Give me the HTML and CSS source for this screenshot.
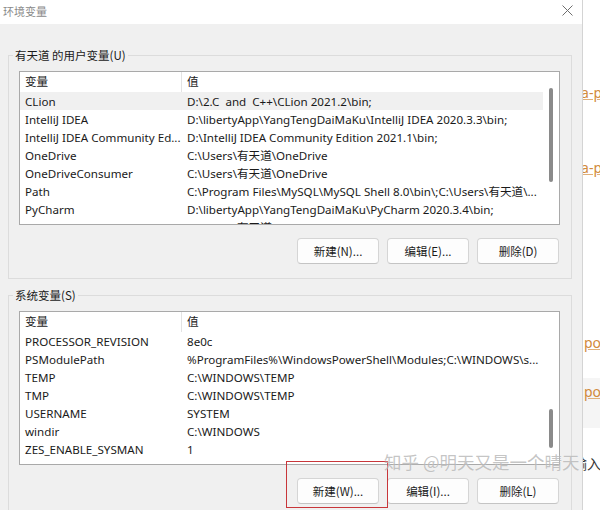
FILE: index.html
```html
<!DOCTYPE html>
<html lang="zh-CN">
<head>
<meta charset="utf-8">
<title>环境变量</title>
<link rel="stylesheet" href="styles.css">
</head>
<body>
<div class="screen">
  <div class="dialog">
    <div class="titlebar">
      <span class="title">环境变量</span>
      <svg class="close" width="11" height="11" viewBox="0 0 11 11"><path d="M0.5 0.5L10.5 10.5M10.5 0.5L0.5 10.5" stroke="#6e6e6e" stroke-width="1" fill="none"/></svg>
    </div>
    <div class="body">
      <fieldset class="group">
        <legend>有天道 的用户变量(U)</legend>
        <div class="list">
          <div class="cols">
            <div class="row head"><div class="c1">变量</div><div class="c2">值</div></div>
            <div class="row sel"><div class="c1">CLion</div><div class="c2">D:\2.C&nbsp; and&nbsp; C++\CLion 2021.2\bin;</div></div>
            <div class="row"><div class="c1">IntelliJ IDEA</div><div class="c2">D:\libertyApp\YangTengDaiMaKu\IntelliJ IDEA 2020.3.3\bin;</div></div>
            <div class="row"><div class="c1">IntelliJ IDEA Community Ed...</div><div class="c2">D:\IntelliJ IDEA Community Edition 2021.1\bin;</div></div>
            <div class="row"><div class="c1">OneDrive</div><div class="c2">C:\Users\有天道\OneDrive</div></div>
            <div class="row"><div class="c1">OneDriveConsumer</div><div class="c2">C:\Users\有天道\OneDrive</div></div>
            <div class="row"><div class="c1">Path</div><div class="c2">C:\Program Files\MySQL\MySQL Shell 8.0\bin\;C:\Users\有天道\...</div></div>
            <div class="row"><div class="c1">PyCharm</div><div class="c2">D:\libertyApp\YangTengDaiMaKu\PyCharm 2020.3.4\bin;</div></div>
            <div class="row"><div class="c1">TEMP</div><div class="c2">C:\Users\有天道\AppData\Local\Temp</div></div>
          </div>
          <div class="scroll"><div class="thumb thumb-user"></div></div>
        </div>
        <div class="buttons">
          <button class="btn">新建(N)...</button>
          <button class="btn">编辑(E)...</button>
          <button class="btn">删除(D)</button>
        </div>
      </fieldset>

      <fieldset class="group group-sys">
        <legend>系统变量(S)</legend>
        <div class="list">
          <div class="cols">
            <div class="row head"><div class="c1">变量</div><div class="c2">值</div></div>
            <div class="row"><div class="c1">PROCESSOR_REVISION</div><div class="c2">8e0c</div></div>
            <div class="row"><div class="c1">PSModulePath</div><div class="c2">%ProgramFiles%\WindowsPowerShell\Modules;C:\WINDOWS\s...</div></div>
            <div class="row"><div class="c1">TEMP</div><div class="c2">C:\WINDOWS\TEMP</div></div>
            <div class="row"><div class="c1">TMP</div><div class="c2">C:\WINDOWS\TEMP</div></div>
            <div class="row"><div class="c1">USERNAME</div><div class="c2">SYSTEM</div></div>
            <div class="row"><div class="c1">windir</div><div class="c2">C:\WINDOWS</div></div>
            <div class="row"><div class="c1">ZES_ENABLE_SYSMAN</div><div class="c2">1</div></div>
          </div>
          <div class="scroll"><div class="thumb thumb-sys"></div></div>
        </div>
        <div class="buttons">
          <div class="marked">
            <button class="btn">新建(W)...</button>
            <span class="redbox"></span>
          </div>
          <button class="btn">编辑(I)...</button>
          <button class="btn">删除(L)</button>
        </div>
      </fieldset>
    </div>
  </div>

  <div class="strip">
    <div class="link s1">ta-po</div>
    <div class="link s2">ta-po</div>
    <div class="link s3">po</div>
    <div class="band"><div class="link">po</div></div>
    <div class="plain s5">输入</div>
  </div>

  <div class="watermark">知乎 @明天又是一个晴天</div>
</div>
</body>
</html>
```

FILE: styles.css
```css
* { box-sizing: border-box; }

body {
  margin: 0;
  background: #fff;
}

.screen {
  position: relative;
  width: 600px;
  height: 510px;
  overflow: hidden;
  display: flex;
  background: #fff;
  font-family: "Noto Sans", "Noto Sans CJK SC", sans-serif;
  color: #1a1a1a;
}

.dialog {
  width: 583px;
  flex: none;
  display: flex;
  flex-direction: column;
  border-right: 1px solid #d4d4d4;
  background: #f0f0f0;
}

.titlebar {
  height: 24px;
  flex: none;
  background: #fff;
  display: flex;
  justify-content: space-between;
  align-items: flex-start;
  padding: 0 9px 0 3px;
}

.title {
  font-family: "Noto Sans CJK SC", sans-serif;
  font-size: 11px;
  line-height: 22px;
  color: #8a8a8a;
}

.close {
  margin-top: 5px;
}

.body {
  flex: 1;
  padding: 23px 10px 0 8px;
}

.group {
  margin: 0;
  min-width: 0;
  border: 1px solid #dcdcdc;
  padding: 8px 11px 14px 10px;
}

.group-sys {
  margin-top: 8px;
}

.group legend {
  font-family: "Noto Sans CJK SC", sans-serif;
  font-size: 11.5px;
  line-height: 16px;
  height: 16px;
  padding: 0 2px;
  margin-left: -6px;
  color: #1a1a1a;
}

.list {
  height: 154px;
  border: 1px solid #a9a9a9;
  background: #fff;
  display: flex;
  overflow: hidden;
}

.cols {
  flex: 1;
  min-width: 0;
}

.row {
  display: flex;
  height: 18px;
  line-height: 19px;
  font-size: 11.6px;
  white-space: nowrap;
}

.row.head {
  height: 20px;
  line-height: 20px;
}

.row.sel {
  background: #f0f0f0;
}

.c1 {
  width: 162px;
  flex: none;
  padding-left: 5px;
  overflow: hidden;
}

.head .c1 {
  border-right: 1px solid #e3e3e3;
}

.c2 {
  flex: 1;
  min-width: 0;
  padding-left: 5px;
  overflow: hidden;
}

.scroll {
  width: 16px;
  flex: none;
  padding-left: 6px;
}

.thumb {
  width: 4px;
  border-radius: 2px;
  background: #8a8a8a;
}

.thumb-user {
  margin-top: 16px;
  height: 94px;
}

.thumb-sys {
  margin-top: 97px;
  height: 39px;
}

.buttons {
  margin-top: 13px;
  display: flex;
  justify-content: flex-end;
  gap: 8px;
  padding-right: 1px;
}

.btn {
  width: 82px;
  height: 26px;
  margin: 0;
  padding: 0;
  font-family: "Noto Sans CJK SC", sans-serif;
  font-size: 11.5px;
  color: #1a1a1a;
  background: #fdfdfd;
  border: 1px solid #d5d5d5;
  border-bottom-color: #c4c4c4;
  border-radius: 4px;
}

.marked {
  position: relative;
  display: flex;
}

.redbox {
  position: absolute;
  left: -11px;
  top: -17px;
  width: 102px;
  height: 47px;
  border: 1.5px solid #c8363a;
}

.strip {
  flex: 1;
  overflow: hidden;
  display: flex;
  flex-direction: column;
  font-size: 14px;
  white-space: nowrap;
}

.link {
  line-height: 20px;
  height: 20px;
  color: #d18a3b;
  text-decoration: underline;
  text-decoration-color: #e0b07a;
}

.s1 { margin-top: 83px; text-indent: -7px; }
.s2 { margin-top: 55px; text-indent: -7px; }
.s3 { margin-top: 155px; text-indent: 1px; }

.band {
  margin-top: 25px;
  height: 50px;
  padding-top: 4px;
  padding-left: 1px;
  background: #f5f5f5;
}

.s5 {
  margin-top: 25px;
  line-height: 20px;
  color: #333;
  font-family: "Noto Sans CJK SC", sans-serif;
  text-indent: -10px;
}

.watermark {
  position: absolute;
  left: 384px;
  top: 451px;
  font-family: "Noto Sans CJK SC", sans-serif;
  font-size: 17.5px;
  line-height: 22px;
  white-space: nowrap;
  color: rgba(140, 140, 140, 0.5);
  text-shadow: 0 0 1px rgba(255, 255, 255, 0.7);
}
```
